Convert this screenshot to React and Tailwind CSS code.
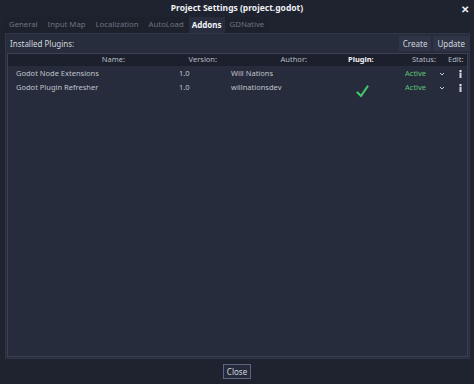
import { useState } from 'react'

const tabs = ['General', 'Input Map', 'Localization', 'AutoLoad', 'Addons', 'GDNative']

const plugins = [
  { name: 'Godot Node Extensions', version: '1.0', author: 'Will Nations', check: false },
  { name: 'Godot Plugin Refresher', version: '1.0', author: 'willnationsdev', check: true },
]

function EditIcon() {
  return (
    <svg width="3" height="8" viewBox="0 0 3 8">
      <rect x="0.5" y="0" width="2" height="2" fill="#e4e7ee" />
      <rect x="0.5" y="2.6" width="2" height="5.4" fill="#d0d4dc" />
    </svg>
  )
}

function Chevron() {
  return (
    <svg width="6" height="4" viewBox="0 0 6 4">
      <path d="M1 1 L3 3 L5 1" stroke="#c8ccd6" strokeWidth="1" fill="none" />
    </svg>
  )
}

function Check() {
  return (
    <svg width="13" height="13" viewBox="0 0 13 13">
      <path d="M1.5 7.5 L5 11 L11.5 1.5" stroke="#45c46a" strokeWidth="2.2" fill="none" strokeLinecap="round" strokeLinejoin="round" />
    </svg>
  )
}

const cols = 'grid grid-cols-[168px_55px_109px_58px_38px_1fr]'

export default function App() {
  const [active, setActive] = useState('Addons')

  return (
    <div className="w-[474px] h-[384px] bg-[#1f232f] flex flex-col text-[7.5px] text-[#c4c8d2] overflow-hidden" style={{ fontFamily: '"Noto Sans", sans-serif' }}>
      {/* Title bar */}
      <div className="relative h-[17px] flex items-center justify-center shrink-0">
        <span className="text-[8.5px] font-bold text-[#eef0f4]">Project Settings (project.godot)</span>
        <span className="absolute right-[5px] top-[2px] text-[10px] font-bold text-[#eef0f4]">✕</span>
      </div>

      {/* Tabs */}
      <div className="flex h-[16px] ml-[4px] shrink-0">
        {tabs.map((t) => (
          <button
            key={t}
            onClick={() => setActive(t)}
            className={
              t === active
                ? 'px-[3px] h-full bg-[#272d3c] text-[#f2f4f8] font-bold text-[8px]'
                : 'px-[5px] h-full bg-[#1d212c] text-[#6d7382] text-[7.75px]'
            }
          >
            {t}
          </button>
        ))}
      </div>

      {/* Panel */}
      <div className="flex-1 ml-[5px] mr-[4px] bg-[#272d3c] border border-[#2f3647] flex flex-col px-[1px] pb-[1px]">
        <div className="flex items-center justify-between h-[19px] shrink-0 -mr-[1px]">
          <span className="pl-[3px] text-[8px] text-[#d2d6de]">Installed Plugins:</span>
          <div className="flex gap-[2px]">
            <button className="h-[15px] px-[4px] bg-[#2f3547] text-[#d2d6de] text-[8px]">Create</button>
            <button className="h-[15px] px-[4px] bg-[#2f3547] text-[#d2d6de] text-[8px]">Update</button>
          </div>
        </div>

        <div className="flex-1 bg-[#262c3b] border border-[#3a4153]">
          {/* Header */}
          <div className={`${cols} h-[12px] items-center bg-[#1c202c] text-[#b8bcc6]`}>
            <div className="text-right pr-[51px]">Name:</div>
            <div className="text-right pr-[14px]">Version:</div>
            <div className="text-right pr-[33px]">Author:</div>
            <div className="pl-[8px] font-bold text-[#f2f4f8]">Plugin:</div>
            <div className="pl-[14px]">Status:</div>
            <div className="pl-[12px]">Edit:</div>
          </div>
          {plugins.map((p) => (
            <div key={p.name} className={`${cols} h-[14px] items-center text-[#c0c4ce] pt-[1px]`}>
              <div className="pl-[8px]">{p.name}</div>
              <div className="pl-[3px]">{p.version}</div>
              <div className="pl-0">{p.author}</div>
              <div className="relative h-full">
                {p.check && (
                  <span className="absolute left-[16px] top-[4px]"><Check /></span>
                )}
              </div>
              <div className="pl-[7px] text-[#5cc576]">Active</div>
              <div className="flex items-center">
                <span className="ml-[3px] flex"><Chevron /></span>
                <span className="ml-[14px] flex"><EditIcon /></span>
              </div>
            </div>
          ))}
        </div>
      </div>

      {/* Footer */}
      <div className="h-[25px] flex items-center justify-center shrink-0">
        <button className="h-[15px] px-[3px] bg-[#252b3a] border border-[#5a6582] text-[#d2d6de] text-[8px]">Close</button>
      </div>
    </div>
  )
}
